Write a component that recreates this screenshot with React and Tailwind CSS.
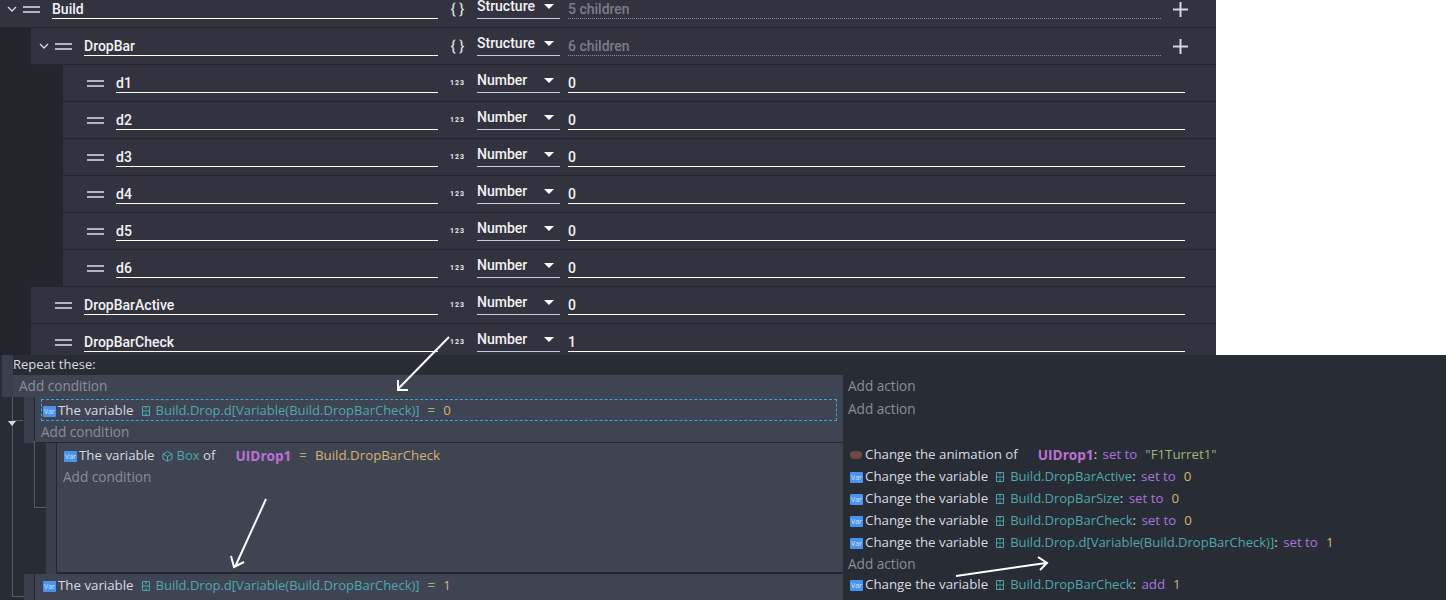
import React from "react";

const varRows = ["d1", "d2", "d3", "d4", "d5", "d6"];

function Handle() {
  return (
    <div className="flex w-[17px] shrink-0 flex-col gap-[3px]">
      <div className="h-[2px] bg-[#b4b5bc]" />
      <div className="h-[2px] bg-[#b4b5bc]" />
    </div>
  );
}

function Chevron() {
  return (
    <svg width="10" height="6" viewBox="0 0 10 6" className="shrink-0">
      <path d="M1 1 L5 5 L9 1" fill="none" stroke="#d8d8de" strokeWidth="1.3" />
    </svg>
  );
}

function Plus() {
  return (
    <svg width="15" height="15" viewBox="0 0 15 15">
      <path d="M0 7.5 H15 M7.5 0 V15" stroke="#d6d6e4" strokeWidth="2" />
    </svg>
  );
}

function Caret() {
  return <div className="h-0 w-0 border-x-[5px] border-t-[5px] border-x-transparent border-t-white" />;
}

// one variable row of the top panel
function VarRow({ name, structure, value, open, root }) {
  return (
    <div className="flex h-[37px] items-center border-b border-[#25262e] bg-[#32333e] text-[14px] font-medium text-[#f2f2f5]">
      <div className={`${root ? "w-[52px]" : "w-[53px]"} flex shrink-0 items-center justify-end gap-[6px] pr-[12px]`}>
        {open && <Chevron />}
        <Handle />
      </div>
      <div className="flex h-[19px] flex-1 items-center border-b border-white pt-[1px] leading-none">{name}</div>
      <div className="flex w-[39px] shrink-0 justify-center">
        {structure ? (
          <span className="text-[15px] font-normal leading-none text-[#e8e8ee]">{"{ }"}</span>
        ) : (
          <span className="text-[7px] font-bold tracking-[1px] text-[#e8e8ee]">123</span>
        )}
      </div>
      <div className="flex h-[19px] w-[83px] shrink-0 items-center justify-between border-b border-[#c5cbe0] pb-[5px] pr-[6px] leading-none">
        <span>{structure ? "Structure" : "Number"}</span>
        <Caret />
      </div>
      {structure ? (
        <>
          <div className="ml-[8px] flex h-[19px] w-[593px] shrink-0 items-center border-b border-dotted border-[#8d8e98] pt-[1px] leading-none text-[#7c7d88]">
            {value}
          </div>
          <div className="flex w-[55px] shrink-0 pl-[12px]">
            <Plus />
          </div>
        </>
      ) : (
        <>
          <div className="ml-[8px] flex h-[19px] w-[617px] shrink-0 items-center border-b border-white pt-[1px] leading-none">{value}</div>
          <div className="w-[31px] shrink-0" />
        </>
      )}
    </div>
  );
}

function VarIcon() {
  return (
    <span className="mr-[2px] flex h-[11px] w-[13px] shrink-0 items-center justify-center rounded-[1px] bg-[#4a94f0] text-[7px] leading-none text-[#cfe3ff]">
      Var
    </span>
  );
}

function SpriteIcon() {
  return <span className="mr-[3px] h-[8px] w-[12px] shrink-0 rounded-full bg-[#6b4a3e]" />;
}

function SceneVar() {
  return (
    <svg width="10" height="10" viewBox="0 0 10 10" className="mr-[5px] ml-[7px] shrink-0">
      <path d="M1.5 .5 H8.5 V9.5 H1.5 Z M1.5 5 H8.5 M5 .5 V3 M5 7 V9.5" fill="none" stroke="#4fa8ae" strokeWidth="1" />
    </svg>
  );
}

function BoxIcon() {
  return (
    <svg width="11" height="11" viewBox="0 0 11 11" className="mr-[4px] ml-[7px] shrink-0">
      <path d="M5.5 .7 L10 3 V8 L5.5 10.3 L1 8 V3 Z M1 3 L5.5 5.4 L10 3 M5.5 5.4 V10.3" fill="none" stroke="#4fa8ae" strokeWidth="1" />
    </svg>
  );
}

function Line({ children, className = "" }) {
  return <div className={`flex h-[22px] items-center whitespace-pre text-[13.3px] text-[#d9dbe0] ${className}`}>{children}</div>;
}

function Cyan({ children }) {
  return <span className="text-[13px] text-[#4fa8ae]">{children}</span>;
}

function Action({ name, to = "set to", value }) {
  return (
    <Line className="pl-[2px]">
      <VarIcon />
      <span>Change the variable</span>
      <SceneVar />
      <Cyan>{name}</Cyan>
      <span>: </span>
      <span className="ml-[2px] text-[#a874dd]">{to}</span>
      <span className="ml-[8px] text-[#d7b36f]">{value}</span>
    </Line>
  );
}

function Condition({ value, dashed }) {
  return (
    <Line className={dashed ? "h-[21px] border border-dashed border-[#3aa6d8] pl-[1px] pt-[2px]" : "pl-[2px]"}>
      <VarIcon />
      <span>The variable</span>
      <SceneVar />
      <Cyan>Build.Drop.d[Variable(Build.DropBarCheck)]</Cyan>
      <span className="ml-[8px] text-[#98b878]">=</span>
      <span className="ml-[8px] text-[#d7b36f]">{value}</span>
    </Line>
  );
}

function AddLabel({ children, className = "" }) {
  return <div className={`flex h-[22px] items-center text-[13.6px] text-[#8b8f98] ${className}`}>{children}</div>;
}

function Arrow({ className, width, height, d }) {
  return (
    <svg width={width} height={height} className={`pointer-events-none absolute ${className}`}>
      <path d={d} fill="none" stroke="white" strokeWidth="2" />
    </svg>
  );
}

export default function App() {
  return (
    <div className="relative h-[600px] w-[1446px] overflow-hidden bg-white font-['Roboto',sans-serif]">
      <div className="h-[355px] w-[1216px] overflow-hidden bg-[#23242c]">
        <div className="-mt-[9px]">
          <VarRow name="Build" structure value="5 children" open root />
          <div className="pl-[31px]">
            <VarRow name="DropBar" structure value="6 children" open />
            <div className="pl-[32px]">
              {varRows.map((name) => (
                <VarRow key={name} name={name} value="0" />
              ))}
            </div>
            <VarRow name="DropBarActive" value="0" />
            <VarRow name="DropBarCheck" value="1" />
          </div>
        </div>
      </div>

      <div className="h-[245px] bg-[#282c34] font-['Open_Sans',sans-serif] text-[13px]">
        {/* Repeat these */}
        <div className="flex h-[42px]">
          <div className="flex w-[843px] shrink-0 pl-[2px]">
            <div className="w-[11px] shrink-0 bg-[#3a3f4b]" />
            <div className="flex-1">
              <div className="flex h-[20px] items-center text-[#d9dbe0]">Repeat these:</div>
              <AddLabel className="bg-[#3e4451] pl-[6px]">Add condition</AddLabel>
            </div>
          </div>
          <div className="flex flex-1 items-end pl-[5px]">
            <AddLabel>Add action</AddLabel>
          </div>
        </div>

        {/* Sub event */}
        <div className="flex h-[46px]">
          <div className="flex w-[843px] shrink-0 pl-[24px]">
            <div className="w-[10px] shrink-0 bg-[#3a3f4b]" />
            <div className="flex-1 border-b border-l border-[#23262c] bg-[#3e4451] px-[6px] pt-[2px]">
              <Condition value="0" dashed />
              <AddLabel>Add condition</AddLabel>
            </div>
          </div>
          <div className="pl-[5px] pt-[1px]">
            <AddLabel>Add action</AddLabel>
          </div>
        </div>

        {/* Nested event */}
        <div className="flex h-[131px]">
          <div className="flex w-[843px] shrink-0 pl-[46px]">
            <div className="w-[10px] shrink-0 bg-[#3a3f4b]" />
            <div className="flex-1 border-b-2 border-l border-[#23262c] bg-[#3e4451] pl-[7px] pt-[2px]">
              <Line>
                <VarIcon />
                <span>The variable</span>
                <BoxIcon />
                <Cyan>Box</Cyan>
                <span> of</span>
                <span className="ml-[20px] text-[13.6px] font-bold text-[#c06fd6]">UIDrop1</span>
                <span className="ml-[8px] text-[#98b878]">=</span>
                <span className="ml-[8px] text-[#d7b36f]">Build.DropBarCheck</span>
              </Line>
              <AddLabel className="-ml-[1px] -mt-[1px]">Add condition</AddLabel>
            </div>
          </div>
          <div className="pl-[5px] pt-[1px]">
            <Line className="pl-[2px]">
              <SpriteIcon />
              <span>Change the animation of</span>
              <span className="ml-[20px] text-[13.6px] font-bold text-[#c06fd6]">UIDrop1</span>
              <span>: </span>
              <span className="ml-[2px] text-[#a874dd]">set to</span>
              <span className="ml-[8px] text-[#98b878]">"F1Turret1"</span>
            </Line>
            <Action name="Build.DropBarActive" value="0" />
            <Action name="Build.DropBarSize" value="0" />
            <Action name="Build.DropBarCheck" value="0" />
            <Action name="Build.Drop.d[Variable(Build.DropBarCheck)]" value="1" />
            <AddLabel className="-mt-[1px]">Add action</AddLabel>
          </div>
        </div>

        {/* Next sub event */}
        <div className="flex h-[26px]">
          <div className="flex w-[843px] shrink-0 pl-[24px]">
            <div className="w-[10px] shrink-0 bg-[#3a3f4b]" />
            <div className="flex-1 border-l border-[#23262c] bg-[#3e4451] px-[6px] pt-[1px]">
              <Condition value="1" />
            </div>
          </div>
          <div className="pl-[5px]">
            <Action name="Build.DropBarCheck" to="add" value="1" />
          </div>
        </div>
      </div>

      {/* tree lines */}
      <div className="absolute left-[12px] top-[397px] h-[200px] w-[12px] border-b border-l border-[#565b66]" />
      <div className="absolute left-[34px] top-[441px] h-[67px] w-[12px] border-b border-l border-[#565b66]" />
      <div className="absolute left-[12px] top-[420px] h-px w-[11px] bg-[#565b66]" />
      <div className="absolute left-[8px] top-[421px] h-0 w-0 border-x-[4px] border-t-[5px] border-x-transparent border-t-[#d9dbe0]" />

      {/* arrows drawn over the screenshot */}
      <Arrow className="left-[390px] top-[330px]" width="66" height="66" d="M59 7 L8 59 M8 50 V60 H18" />
      <Arrow className="left-[226px] top-[495px]" width="45" height="78" d="M40 4 L9 72 M5 61 L8 72 L18 67" />
      <Arrow className="left-[950px] top-[552px]" width="104" height="30" d="M6 24 L96 11 M88 5 L97 11 L90 18" />
    </div>
  );
}
